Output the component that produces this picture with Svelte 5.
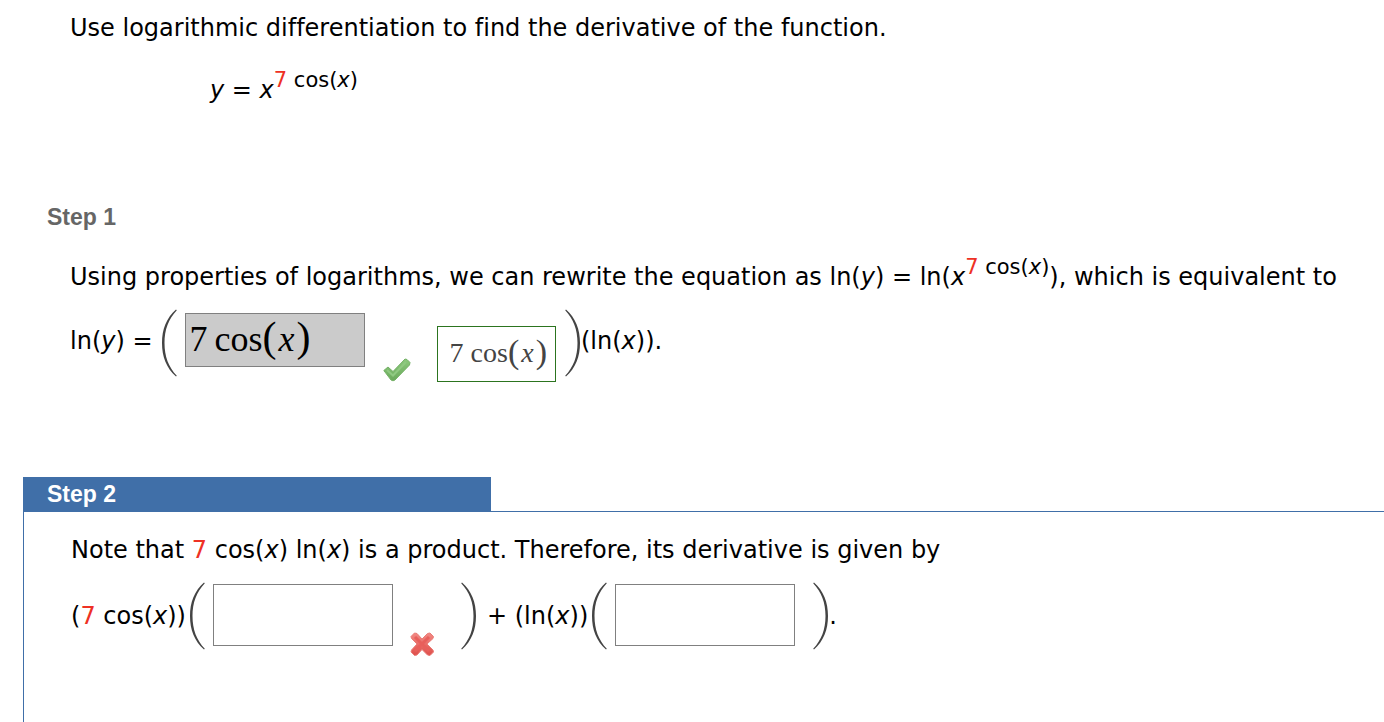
<script>
  let first = $state('');
  let second = $state('');
</script>

{#snippet paren(close)}
  <svg class="paren" viewBox="0 0 16 68" aria-hidden="true">
    <path
      d="M15 .5C5.500 9 1 20 1 34s4.500 25 14 33.500l.8-.7C7.500 58 3.500 47.500 3.500 34S7.500 10 15.800 1.200z"
      fill="#444"
      transform={close ? 'matrix(-1 0 0 1 16 0)' : undefined}
    />
  </svg>
{/snippet}

{#snippet exponent()}
  <sup><span class="num">7</span> cos(<i>x</i>)</sup>
{/snippet}

<main>
  <section class="question">
    <p>Use logarithmic differentiation to find the derivative of the function.</p>
    <p class="formula"><i>y</i> = <i>x</i>{@render exponent()}</p>
  </section>

  <section class="step-one">
    <h2>Step 1</h2>
    <p>
      Using properties of logarithms, we can rewrite the equation as ln(<i>y</i>) = ln(<i>x</i>{@render exponent()}), which is equivalent to
    </p>
    <div class="row">
      <span class="term lead">ln(<i>y</i>) =</span>
      {@render paren(false)}
      <output class="answer math"><span>7</span><span>cos</span><b>(</b><i>x</i><b>)</b></output>
      <svg class="check" viewBox="0 0 28 24" role="img" aria-label="Correct">
        <defs>
          <linearGradient id="green" x1="0" y1="0" x2="0" y2="1">
            <stop offset="0" stop-color="#8cc97c" />
            <stop offset="1" stop-color="#6aa95b" />
          </linearGradient>
        </defs>
        <path d="M.8 12.500 5 9l5 4.500L22 1l2 .5 3 3-.5 2.500L12 22l-2 .8L8 22z" fill="url(#green)" stroke="#74b166" stroke-linejoin="round" />
        <path d="m4 12 6 5.500L23 4" fill="none" stroke="#8fc981" stroke-width="2" />
      </svg>
      <span class="key math"><span>7</span><span>cos</span><b>(</b><i>x</i><b>)</b></span>
      {@render paren(true)}
      <span class="term">(ln(<i>x</i>)).</span>
    </div>
  </section>

  <section class="step-two">
    <h2>Step 2</h2>
    <div class="panel">
      <p>Note that <span class="num">7</span> cos(<i>x</i>) ln(<i>x</i>) is a product. Therefore, its derivative is given by</p>
      <div class="row">
        <span class="term">(<span class="num">7</span> cos(<i>x</i>))</span>
        {@render paren(false)}
        <input class="blank" aria-label="First missing factor" bind:value={first} />
        <svg class="cross" viewBox="0 0 26 26" role="img" aria-label="Incorrect">
          <defs>
            <linearGradient id="red" x1="0" y1="0" x2="0" y2="1">
              <stop offset="0" stop-color="#f28a84" />
              <stop offset="1" stop-color="#df4f4b" />
            </linearGradient>
          </defs>
          <path
            d="M2 5.500 5.500 2 8 2.500l5 5.500 5.500-5.500L21 2l3.500 3.500-.5 2-6 5.500 6 6 .5 2L21 24.500l-2.500-.5-5.500-5.500L8 24l-2.500.5L2 21l.5-2L8 13 2.500 7.500z"
            fill="url(#red)" stroke="#ea7c77" stroke-linejoin="round"
          />
          <path d="m6 6 14 14M20 6 6 20" stroke="#e85f5b" stroke-width="3" />
        </svg>
        {@render paren(true)}
        <span class="term plus">+ (ln(<i>x</i>))</span>
        {@render paren(false)}
        <input class="blank" aria-label="Second missing factor" bind:value={second} />
        <span class="end">{@render paren(true)}</span>
        <span class="term">.</span>
      </div>
    </div>
  </section>
</main>

<style>
  :global(body) {
    margin: 0;
    background: #fff;
  }
  main {
    display: flex;
    flex-direction: column;
    min-height: 100vh;
    overflow: hidden;
    font-family: Verdana, "DejaVu Sans", sans-serif;
    font-size: 24px;
    line-height: 32px;
    font-variant-ligatures: none;
    color: #000;
  }
  p,
  h2 {
    margin: 0;
  }
  h2 {
    font: bold 23px/32px "Liberation Sans", Arial, sans-serif;
  }
  .num {
    color: #ee3124;
  }
  sup {
    font-size: 21px;
    line-height: 0;
    vertical-align: 11px;
  }
  .question {
    padding: 12px 24px 0 70px;
  }
  .formula {
    padding: 30px 0 0 140px;
  }
  .step-one {
    padding: 95px 24px 0 70px;
  }
  .step-one h2 {
    margin: 0 0 28px -23px;
    color: #666;
  }
  .row {
    display: flex;
    align-items: flex-start;
    white-space: nowrap;
  }
  .step-one .row {
    margin-top: 16px;
  }
  .paren {
    flex: none;
    width: 16px;
    height: 68px;
  }
  .term {
    padding-top: 16px;
  }
  .lead {
    margin-right: 8px;
  }
  .math {
    display: flex;
    box-sizing: border-box;
    font-family: "Liberation Serif", serif;
  }
  .math b {
    font-weight: normal;
  }
  .answer {
    width: 180px;
    height: 54px;
    margin: 4px 18px 0 8px;
    padding-left: 4px;
    border: 1px solid #808080;
    background: #cbcbcb;
    font-size: 36px;
    line-height: 50px;
  }
  .math span:first-child {
    margin-right: 7px;
  }
  .math i {
    margin: 0 2px;
  }
  .answer b {
    font-size: 42px;
    line-height: 46px;
  }
  .check {
    flex: none;
    width: 28px;
    height: 24px;
    margin: 49px 26px 0 0;
  }
  .key {
    height: 56px;
    margin: 17px 9px 0 0;
    padding: 0 8px 0 12px;
    border: 1px solid #2c741f;
    color: #444;
    font-size: 28px;
    line-height: 52px;
  }
  .key b {
    font-size: 34px;
    line-height: 50px;
  }
  .step-two {
    display: flex;
    flex: 1;
    flex-direction: column;
    margin: 95px 0 0 23px;
  }
  .step-two h2 {
    width: 468px;
    box-sizing: border-box;
    padding: 1px 24px;
    background: #406fa8;
    color: #fff;
  }
  .panel {
    flex: 1;
    padding: 22px 24px 48px 47px;
    border-top: 1px solid #406fa8;
    border-left: 1px solid #406fa8;
  }
  .panel .row {
    margin-top: 16px;
  }
  .panel .term {
    padding-top: 18px;
    margin-right: 3px;
  }
  .blank {
    width: 180px;
    height: 62px;
    box-sizing: border-box;
    margin: 2px 0 0 8px;
    padding: 0 6px;
    border: 1px solid #808080;
    border-radius: 0;
    background: #fff;
    font: 32px "Liberation Serif", serif;
  }
  .cross {
    flex: none;
    width: 26px;
    height: 26px;
    margin: 49px 26px 0 16px;
  }
  .plus {
    margin-left: 10px;
  }
  .end {
    display: flex;
    margin-left: 18px;
  }
</style>
